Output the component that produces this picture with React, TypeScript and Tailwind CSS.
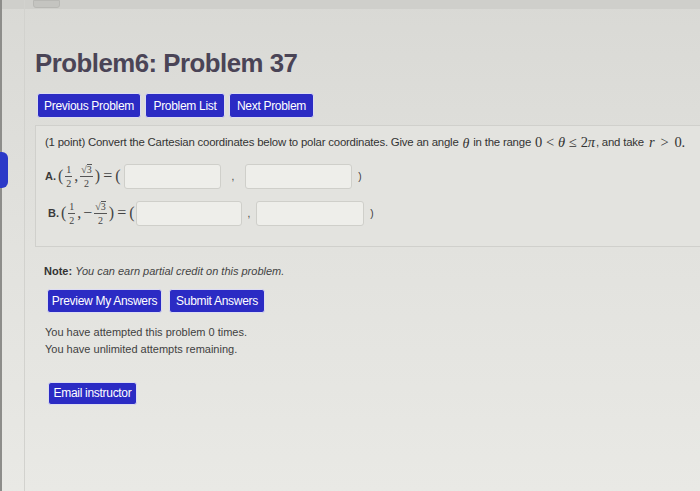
import React from "react";

const serif = { fontFamily: '"Liberation Serif", "DejaVu Serif", serif' };

const Frac = ({ n, d }: { n: React.ReactNode; d: React.ReactNode }) => (
  <span className="inline-flex flex-col items-center align-middle mx-[2px] text-[10px] leading-[11px] text-[#444]">
    <span className="px-[1px] border-b border-[#555] pb-[1px]">{n}</span>
    <span className="pt-[1px]">{d}</span>
  </span>
);

const Sqrt3 = () => (
  <span className="inline-flex items-start">
    <span>√</span>
    <span className="border-t border-[#555] leading-[10px]">3</span>
  </span>
);

const Btn = ({ children, cls }: { children: React.ReactNode; cls: string }) => (
  <div
    className={`flex items-center justify-center rounded-[3px] bg-[#2b2bc4] text-white text-[12px] tracking-[-0.3px] border border-[#dcdcf2] ${cls}`}
  >
    {children}
  </div>
);

const Input = ({ cls }: { cls: string }) => (
  <div className={`rounded-[3px] border border-[#cfcfca] bg-[#eeeeea] ${cls}`} />
);

export default function App() {
  return (
    <div
      className="w-[700px] h-[491px] overflow-hidden flex bg-gradient-to-b from-[#d9d9d5] via-[#e2e2de] to-[#e9e9e5] text-[#3a3a3a]"
      style={{ fontFamily: '"Liberation Sans", Arial, sans-serif' }}
    >
      <div className="w-[2px] bg-[#8d8d8a] shrink-0" />
      <div className="w-[23px] shrink-0 border-r border-[#d2d2ce] flex flex-col">
        <div className="h-[9px] bg-[#cfcfcb]" />
        <div className="mt-[143px] w-[8px] h-[36px] bg-[#2b39c8] rounded-r-[6px] -ml-[2px]" />
      </div>
      <div className="flex-1 flex flex-col">
        <div className="h-[9px] bg-[#cfcfcb] flex">
          <div className="ml-[8px] w-[27px] h-[8px] rounded-b-[3px] bg-[#c4c4c0] border border-[#b8b8b4]" />
        </div>
        <h1 className="mt-[38px] ml-[10px] text-[25.8px] font-bold text-[#4a4456] leading-[32px] tracking-[-0.5px]">
          Problem6: Problem 37
        </h1>
        <div className="mt-[14px] ml-[12px] flex gap-[4px]">
          <Btn cls="w-[104px] h-[25px]">Previous Problem</Btn>
          <Btn cls="w-[80px] h-[25px]">Problem List</Btn>
          <Btn cls="w-[85px] h-[25px]">Next Problem</Btn>
        </div>
        <div className="mt-[7px] ml-[10px] h-[122px] border border-[#d0d0cc] border-r-0 bg-[#e3e3df] pt-[8px] pl-[9px]">
          <div className="text-[11.4px] tracking-[-0.2px] text-[#333] flex items-center whitespace-nowrap h-[18px]">
            (1 point) Convert the Cartesian coordinates below to polar coordinates. Give an angle
            <span className="italic mx-[4px] text-[14px]" style={serif}>θ</span>
            in the range
            <span className="ml-[4px] text-[14.5px] flex items-center" style={serif}>
              0<span className="mx-[4px]">&lt;</span><i>θ</i><span className="mx-[4px]">≤</span>2<i>π</i>
            </span>
            <span className="ml-[1px]">, and take</span>
            <span className="ml-[5px] text-[14.5px] flex items-center" style={serif}>
              <i>r</i><span className="mx-[6px]">&gt;</span>0.
            </span>
          </div>
          <div className="mt-[11px] flex items-center text-[11.5px] h-[26px]">
            <span className="font-bold text-[11px]">A.</span>
            <span className="ml-[2px] flex items-center text-[16px] text-[#444]" style={serif}>
              (<Frac n="1" d="2" />,<Frac n={<Sqrt3 />} d="2" />)<span className="mx-[3px]">=</span>(
            </span>
            <Input cls="ml-[3px] w-[97px] h-[25px]" />
            <span className="mx-[11px] text-[10px]">,</span>
            <Input cls="w-[107px] h-[25px]" />
            <span className="ml-[6px] text-[10px]">)</span>
          </div>
          <div className="mt-[11px] flex items-center text-[11.5px] h-[26px]">
            <span className="font-bold text-[11px] ml-[3px]">B.</span>
            <span className="ml-[2px] flex items-center text-[16px] text-[#444]" style={serif}>
              (<Frac n="1" d="2" />,<span className="ml-[2px]">−</span><Frac n={<Sqrt3 />} d="2" />)<span className="mx-[3px]">=</span>(
            </span>
            <Input cls="ml-[1px] w-[106px] h-[25px]" />
            <span className="mx-[6px] text-[10px]">,</span>
            <Input cls="w-[108px] h-[25px]" />
            <span className="ml-[6px] text-[10px]">)</span>
          </div>
        </div>
        <div className="mt-[16px] ml-[19px] text-[11px] text-[#333]">
          <span className="font-bold">Note:</span> <i className="text-[#444]">You can earn partial credit on this problem.</i>
        </div>
        <div className="mt-[9px] ml-[22px] flex gap-[7px]">
          <Btn cls="w-[115px] h-[24px]">Preview My Answers</Btn>
          <Btn cls="w-[96px] h-[24px]">Submit Answers</Btn>
        </div>
        <div className="mt-[11px] ml-[20px] text-[11px] leading-[17px] text-[#3f3f3f]">
          <div>You have attempted this problem 0 times.</div>
          <div>You have unlimited attempts remaining.</div>
        </div>
        <div className="mt-[24px] ml-[23px] flex">
          <Btn cls="w-[89px] h-[23px]">Email instructor</Btn>
        </div>
      </div>
    </div>
  );
}
